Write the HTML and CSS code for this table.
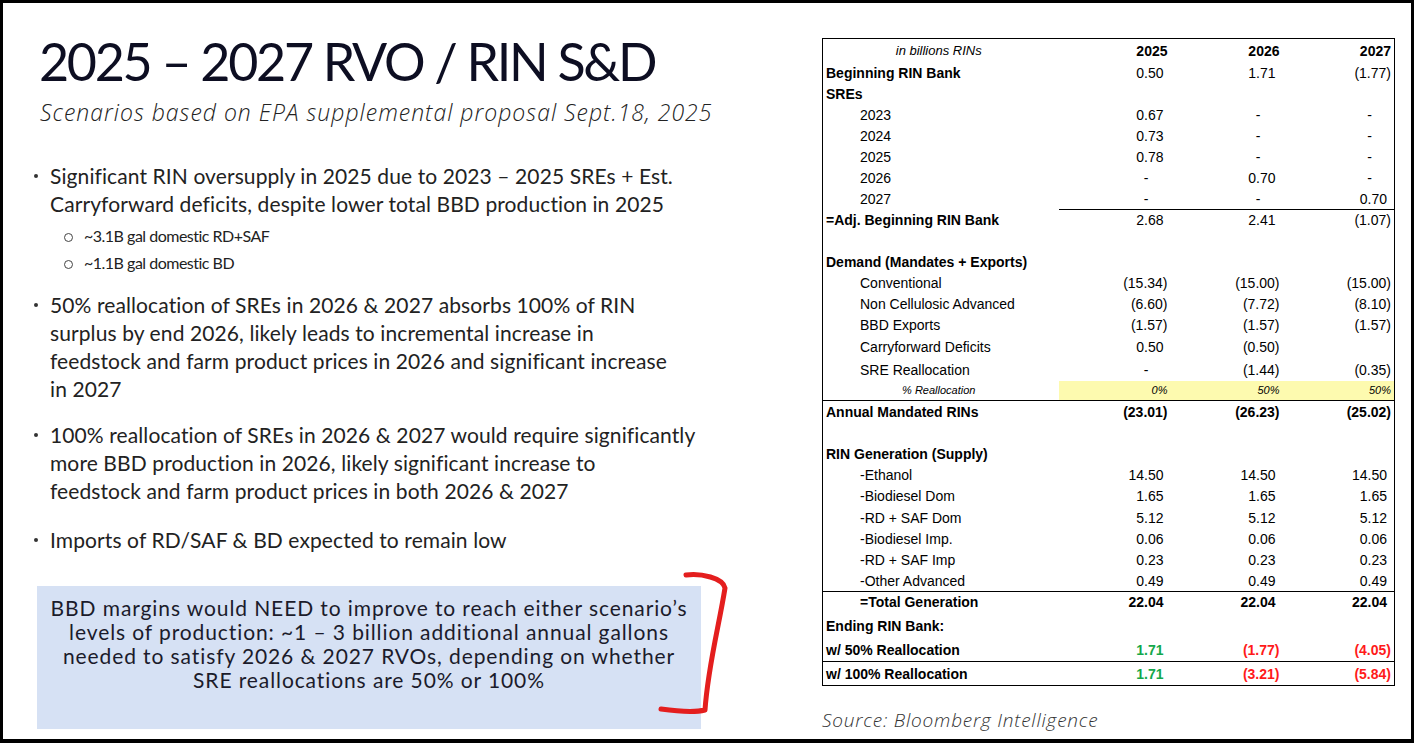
FILE: index.html
```html
<!DOCTYPE html>
<html>
<head>
<meta charset="utf-8">
<link rel="stylesheet" href="styles.css">
</head>
<body>
<div class="frame">
  <section class="left">
    <h1 class="title">2025 – 2027 RVO / RIN S&amp;D</h1>
    <p class="subtitle">Scenarios based on EPA supplemental proposal Sept.18, 2025</p>
    <ul class="bullets">
      <li class="b1">Significant RIN oversupply in 2025 due to 2023 – 2025 SREs + Est.<br>Carryforward deficits, despite lower total BBD production in 2025
        <ul class="sub">
          <li>~3.1B gal domestic RD+SAF</li>
          <li>~1.1B gal domestic BD</li>
        </ul>
      </li>
      <li class="b2">50% reallocation of SREs in 2026 &amp; 2027 absorbs 100% of RIN<br>surplus by end 2026, likely leads to incremental increase in<br>feedstock and farm product prices in 2026 and significant increase<br>in 2027</li>
      <li class="b3">100% reallocation of SREs in 2026 &amp; 2027 would require significantly<br>more BBD production in 2026, likely significant increase to<br>feedstock and farm product prices in both 2026 &amp; 2027</li>
      <li class="b4">Imports of RD/SAF &amp; BD expected to remain low</li>
    </ul>
    <div class="callout">
      <p>BBD margins would NEED to improve to reach either scenario’s<br>levels of production: ~1 – 3 billion additional annual gallons<br>needed to satisfy 2026 &amp; 2027 RVOs, depending on whether<br>SRE reallocations are 50% or 100%</p>
    </div>
    <svg class="bracket" width="90" height="160" viewBox="0 0 90 160">
      <path d="M33 9 C48 7 70 12 72 22 C66 60 55 100 52 144 C40 147 22 145 8 143" fill="none" stroke="#e41e1e" stroke-width="5" stroke-linecap="round" stroke-linejoin="round"/>
    </svg>
  </section>
  <section class="right">
    <table class="rin">
      <colgroup><col class="c-label"><col class="c-val"><col class="c-val"><col class="c-val"></colgroup>
      <tr class="h24"><td class="units">in billions RINs</td><th>2025</th><th>2026</th><th>2027</th></tr>
      <tr><td class="bold">Beginning RIN Bank</td><td>0.50</td><td>1.71</td><td class="n">(1.77)</td></tr>
      <tr><td class="bold">SREs</td><td></td><td></td><td></td></tr>
      <tr><td class="ind">2023</td><td>0.67</td><td class="dash">-</td><td class="dash">-</td></tr>
      <tr><td class="ind">2024</td><td>0.73</td><td class="dash">-</td><td class="dash">-</td></tr>
      <tr><td class="ind">2025</td><td>0.78</td><td class="dash">-</td><td class="dash">-</td></tr>
      <tr><td class="ind">2026</td><td class="dash">-</td><td>0.70</td><td class="dash">-</td></tr>
      <tr><td class="ind">2027</td><td class="dash ul">-</td><td class="dash ul">-</td><td class="ul">0.70</td></tr>
      <tr><td class="bold">=Adj. Beginning RIN Bank</td><td>2.68</td><td>2.41</td><td class="n">(1.07)</td></tr>
      <tr><td></td><td></td><td></td><td></td></tr>
      <tr><td class="bold">Demand (Mandates + Exports)</td><td></td><td></td><td></td></tr>
      <tr><td class="ind">Conventional</td><td class="n">(15.34)</td><td class="n">(15.00)</td><td class="n">(15.00)</td></tr>
      <tr><td class="ind">Non Cellulosic Advanced</td><td class="n">(6.60)</td><td class="n">(7.72)</td><td class="n">(8.10)</td></tr>
      <tr><td class="ind">BBD Exports</td><td class="n">(1.57)</td><td class="n">(1.57)</td><td class="n">(1.57)</td></tr>
      <tr class="h23"><td class="ind">Carryforward Deficits</td><td>0.50</td><td class="n">(0.50)</td><td></td></tr>
      <tr class="h22"><td class="ind">SRE Reallocation</td><td class="dash">-</td><td class="n">(1.44)</td><td class="n">(0.35)</td></tr>
      <tr class="h20 pct"><td class="pctlabel">% Reallocation</td><td class="yel">0%</td><td class="yel">50%</td><td class="yel">50%</td></tr>
      <tr class="h22 topline"><td class="bold">Annual Mandated RINs</td><td class="bold n">(23.01)</td><td class="bold n">(26.23)</td><td class="bold n">(25.02)</td></tr>
      <tr><td></td><td></td><td></td><td></td></tr>
      <tr><td class="bold">RIN Generation (Supply)</td><td></td><td></td><td></td></tr>
      <tr><td class="ind">-Ethanol</td><td>14.50</td><td>14.50</td><td>14.50</td></tr>
      <tr><td class="ind">-Biodiesel Dom</td><td>1.65</td><td>1.65</td><td>1.65</td></tr>
      <tr class="h22"><td class="ind">-RD + SAF Dom</td><td>5.12</td><td>5.12</td><td>5.12</td></tr>
      <tr><td class="ind">-Biodiesel Imp.</td><td>0.06</td><td>0.06</td><td>0.06</td></tr>
      <tr><td class="ind">-RD + SAF Imp</td><td>0.23</td><td>0.23</td><td>0.23</td></tr>
      <tr><td class="ind">-Other Advanced</td><td>0.49</td><td>0.49</td><td>0.49</td></tr>
      <tr class="topline"><td class="ind bold">=Total Generation</td><td class="bold">22.04</td><td class="bold">22.04</td><td class="bold">22.04</td></tr>
      <tr class="h26"><td class="bold">Ending RIN Bank:</td><td></td><td></td><td></td></tr>
      <tr class="h23"><td class="bold">w/ 50% Reallocation</td><td class="bold green">1.71</td><td class="bold red n">(1.77)</td><td class="bold red n">(4.05)</td></tr>
      <tr class="h24 topline"><td class="bold">w/ 100% Reallocation</td><td class="bold green">1.71</td><td class="bold red n">(3.21)</td><td class="bold red n">(5.84)</td></tr>
    </table>
    <p class="source">Source: Bloomberg Intelligence</p>
  </section>
</div>
</body>
</html>
```

FILE: styles.css
```css
* { box-sizing: border-box; }
html, body { margin: 0; padding: 0; background: #fff; }
.frame {
  width: 1414px;
  height: 743px;
  border: 3px solid #000;
  border-bottom-width: 4px;
  display: flex;
  position: relative;
  overflow: hidden;
}
.left {
  width: 816px;
  padding-left: 34px;
  position: relative;
  color: #15162a;
  font-family: Lato, "Liberation Sans", sans-serif;
}
.title {
  margin: 28px 0 0 2px;
  font-size: 52px;
  font-weight: 400;
  letter-spacing: -2.3px;
  line-height: 60px;
  color: #0d0e22;
}
.subtitle {
  margin: 6px 0 0 3px;
  font-family: "Open Sans", Lato, sans-serif;
  font-size: 23px;
  font-style: italic;
  font-weight: 300;
  letter-spacing: 1px;
  line-height: 30px;
  color: #222;
}
.bullets {
  list-style: none;
  margin: 35px 0 0 0;
  padding: 0;
  font-size: 21px;
  letter-spacing: 0.1px;
  line-height: 28px;
  color: #222;
}
.bullets > li {
  position: relative;
  padding-left: 13px;
  margin-bottom: 20px;
}
.bullets > li::before {
  content: "";
  position: absolute;
  left: -3px;
  top: 12px;
  width: 4px;
  height: 4px;
  border-radius: 50%;
  background: #333;
}
.bullets > li.b1 { margin-bottom: 15px; }
.bullets > li.b2 { margin-bottom: 18px; }
.bullets > li.b3 { margin-bottom: 21px; }
.sub {
  list-style: none;
  margin: 4px 0 0 0;
  padding: 0;
  font-size: 16px;
  letter-spacing: -0.5px;
  line-height: 27px;
}
.sub li {
  position: relative;
  padding-left: 34px;
}
.sub li::before {
  content: "";
  position: absolute;
  left: 14px;
  top: 11px;
  width: 7px;
  height: 7px;
  border: 1px solid #444;
  border-radius: 50%;
}
.callout {
  margin-top: 32px;
  width: 664px;
  height: 143px;
  background: #d6e1f4;
  padding-top: 10px;
  text-align: center;
}
.callout p {
  margin: 0;
  font-size: 21px;
  letter-spacing: 0.9px;
  line-height: 24px;
  color: #1b1b2b;
}
.bracket {
  position: absolute;
  left: 650px;
  top: 563px;
}
.right {
  flex: 1;
  padding-top: 35px;
  padding-left: 3px;
  font-family: "Liberation Sans", Arial, sans-serif;
}
.rin {
  border-collapse: collapse;
  width: 572px;
  border: 1px solid #000;
  font-size: 14px;
  color: #000;
  table-layout: fixed;
}
.c-label { width: 236px; }
.c-val { width: 112px; }
.rin tr { height: 21px; }
.rin tr.h20 { height: 20px; }
.rin tr.h22 { height: 22px; }
.rin tr.h23 { height: 23px; }
.rin tr.h24 { height: 24px; }
.rin tr.h26 { height: 26px; }
.rin td, .rin th {
  padding: 0 7px 0 3px;
  text-align: right;
  white-space: nowrap;
  line-height: 16px;
}
.rin th { font-weight: 700; padding-right: 3px; }
.rin td:first-child { text-align: left; }
.rin td.n { padding-right: 3px; }
.rin td.units {
  text-align: center;
  font-style: italic;
  font-size: 13px;
}
.rin .bold { font-weight: 700; }
.rin td.ind { padding-left: 37px; }
.rin td.dash { padding-right: 22px; }
.rin td.ul { border-bottom: 1px solid #000; }
.rin tr.topline td { border-top: 1.5px solid #000; }
.rin td.pctlabel {
  text-align: center;
  font-style: italic;
  font-size: 11px;
}
.rin td.yel {
  background: #fdfaaf;
  font-style: italic;
  font-size: 11px;
  padding-right: 3px;
}
.rin .green { color: #13a84a; }
.rin .red { color: #ff1a1a; }
.source {
  margin: 21px 0 0 0;
  font-family: "Open Sans", Lato, sans-serif;
  font-style: italic;
  font-weight: 300;
  font-size: 19px;
  letter-spacing: 0.8px;
  color: #333;
}
```
